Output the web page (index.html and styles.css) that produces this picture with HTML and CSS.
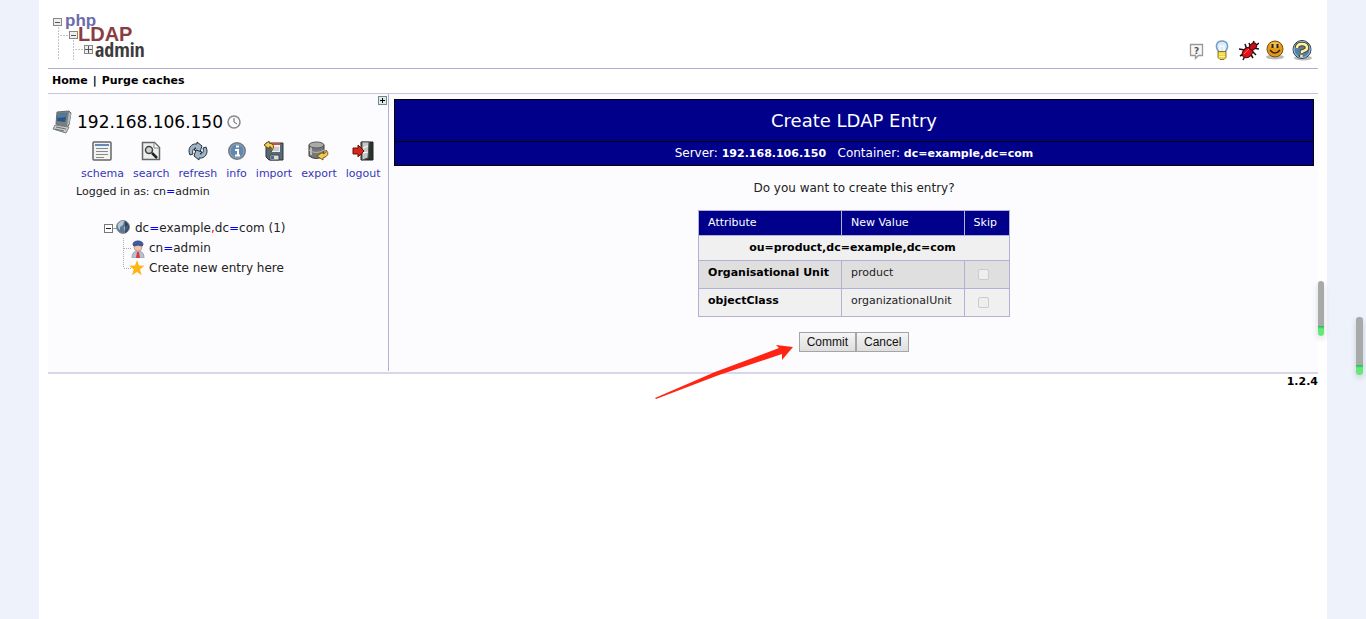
FILE: index.html
```html
<!DOCTYPE html>
<html lang="en">
<head>
    <meta charset="UTF-8">
    <meta name="viewport" content="width=device-width, initial-scale=1.0">
    <title>phpLDAPadmin - Create LDAP Entry</title>
    <link rel="stylesheet" href="styles.css">
</head>
<body>
    <div class="page">
        <header class="header">
            <svg class="logo" width="98" height="50" viewBox="0 0 98 50" role="img" aria-label="phpLDAPadmin">
                <g stroke="#c4c4c4" stroke-dasharray="2 1" fill="none">
                    <path d="M6.500 15v33M21.500 28v20M8 23.500h9M23 37.500h9"/>
                </g>
                <text class="logo-php" x="13" y="14">php</text>
                <text class="logo-ldap" x="26" y="29">LDAP</text>
                <text class="logo-admin" x="43" y="45">admin</text>
                <g fill="#eee" stroke="#888">
                    <rect x="1.500" y="6.500" width="8" height="7"/>
                    <rect x="17.500" y="19.500" width="8" height="7"/>
                    <rect x="32.500" y="33.500" width="8" height="8"/>
                </g>
                <path d="M3 10.500h5M19 23.500h5M33 37.500h7M36.500 34v7" stroke="#555"/>
            </svg>
            <nav class="quick-links">
                <a href="#" aria-label="Request">
                    <svg width="20" height="22" viewBox="0 0 20 22"><path d="M3.500 4.500h12v11h-4l-3 3v-3h-5z" fill="#f8f8f8" stroke="#999" stroke-width="1.300"/><text class="icon-mark" x="7" y="14">?</text></svg>
                </a>
                <a href="#" aria-label="Hints">
                    <svg width="20" height="22" viewBox="0 0 20 22"><path d="M6 12C1 6 4 1 9 1S17 6 12 12z" fill="#dbe9f8" stroke="#6f9dcc" stroke-width="1.500"/><path d="M7 11V5l2 2 2-2v6" fill="none" stroke="#fff"/><path d="M5 11.500h8v6l-2 2H7l-2-2z" fill="#efd045" stroke="#8b751f"/><path d="M6 14h6M6 16.500h6" stroke="#fff39b"/></svg>
                </a>
                <a href="#" aria-label="Bugs">
                    <svg width="20" height="22" viewBox="0 0 20 22"><path d="M0 9l6 1M1 16l5-3M4 20l2-4M6 4l2 6M10 3l2 5M14 18l-3-5M17 15l-4-4M20 9l-6-1M13 6l2-5M16 6l4-3" fill="none" stroke="#181010" stroke-width="1.500"/><ellipse cx="8.500" cy="12.500" rx="6" ry="4.500" transform="rotate(-42 8.500 12.500)" fill="#e31018" stroke="#4c0507"/><ellipse cx="14" cy="6.500" rx="4" ry="3" transform="rotate(-42 14 6.500)" fill="#c20f18" stroke="#4c0507"/><path d="M5 14l5-5" stroke="#ff7070"/></svg>
                </a>
                <a href="#" aria-label="Donate">
                    <svg width="20" height="22" viewBox="0 0 20 22"><ellipse cx="10" cy="17" rx="9" ry="2.500" fill="#bbb"/><circle cx="10" cy="9" r="8" fill="#e39a1a" stroke="#76500e"/><ellipse cx="10" cy="5" rx="5" ry="3" fill="#f4bd4c"/><path d="M7.500 4v4M12.500 4v4" stroke="#222" stroke-width="2"/><path d="M5 10q5 6 10 0" fill="none" stroke="#3c2500" stroke-width="1.500"/></svg>
                </a>
                <a href="#" aria-label="Help">
                    <svg width="22" height="22" viewBox="0 0 22 22"><ellipse cx="12" cy="18" rx="9" ry="2.500" fill="#bbb"/><circle cx="11" cy="9.500" r="9" fill="#5580a8" stroke="#2c4257"/><circle cx="11" cy="9.500" r="8" fill="none" stroke="#a4c3dc"/><path d="M6 8q0-4 5-4t5 4q0 2-5 3.500v1.500M10 15v2" fill="none" stroke="#4f4724" stroke-width="4.500"/><path d="M6 8q0-4 5-4t5 4q0 2-5 3.500v1.500M10.500 15v2" fill="none" stroke="#fff2a5" stroke-width="2.500"/></svg>
                </a>
            </nav>
        </header>

        <nav class="menu"><a href="#">Home</a><span class="divider">|</span><a href="#">Purge caches</a></nav>

        <div class="content">
            <aside class="sidebar">
                <button class="expand" aria-label="Expand tree">
                    <svg width="9" height="9" viewBox="0 0 9 9"><rect x="0.500" y="0.500" width="8" height="8" fill="#dce9e9" stroke="#75898d"/><path d="M2 4.500h5M4.500 2v5" stroke="#000"/></svg>
                </button>
                <div class="server">
                    <svg width="22" height="24" viewBox="0 0 22 24"><path d="M5 2l12-1 2 2-2 12-2 2-11-3z" fill="#788084" stroke="#606a6c"/><path d="M6 4l9-1-2 9-8-1z" fill="#285582"/><path d="M6 4l9-1-1 4-8 1z" fill="#527a9e"/><path d="M17 2l2 2-2 10-2 2z" fill="#b8bdb8"/><path d="M3 15l14 2-3 6-13-4z" fill="#c6cbc7" stroke="#788080"/><path d="M4 17l10 2M3 19l9 2" stroke="#687270"/></svg>
                    <span>192.168.106.150</span>
                    <svg width="16" height="16" viewBox="0 0 16 16"><circle cx="8" cy="8" r="6" fill="#fafafa" stroke="#888" stroke-width="1.500"/><path d="M8 4v4l3 2" fill="none" stroke="#666"/></svg>
                </div>
                <nav class="tools">
                    <a href="#">
                        <svg width="20" height="20" viewBox="0 0 20 20"><rect x="1" y="1" width="18" height="18" rx="1" fill="#f2f2f2" stroke="#666" stroke-width="1.500"/><path d="M3 4h14" stroke="#658ab5" stroke-width="2"/><path d="M4 7.500h12M4 10.500h12M4 13.500h12M4 16.500h8" stroke="#888"/></svg>
                        schema
                    </a>
                    <a href="#">
                        <svg width="20" height="20" viewBox="0 0 20 20"><path d="M1.500 1.500h12l5 5v12h-17z" fill="#eee" stroke="#666" stroke-width="1.500"/><path d="M13 2v5h5" fill="#fff" stroke="#888"/><circle cx="8" cy="9" r="3.500" fill="#c9d4d8" stroke="#444" stroke-width="1.500"/><path d="M11 12l5 5" stroke="#222" stroke-width="2.500"/></svg>
                        search
                    </a>
                    <a href="#">
                        <svg width="20" height="20" viewBox="0 0 20 20"><g fill="#9fb4c8" stroke="#26323e"><path d="M2 14C-1 8 3 2 9 3V1l5 4-2 6-6-2 2-2C5 7 4 10 5 13z"/><path d="M18 6c3 6-1 12-7 11v2l-5-4 2-6 6 2-2 2c3 0 4-3 3-6z"/></g></svg>
                        refresh
                    </a>
                    <a href="#">
                        <svg width="20" height="20" viewBox="0 0 20 20"><circle cx="10" cy="10" r="8" fill="#6488ac" stroke="#727b84" stroke-width="2"/><circle cx="10" cy="10" r="7" fill="none" stroke="#8da9c3"/><path d="M8 9h3v5M8 14.500h5M9 5.500h3" fill="none" stroke="#fff" stroke-width="2"/></svg>
                        info
                    </a>
                    <a href="#">
                        <svg width="20" height="20" viewBox="0 0 20 20"><path d="M2 2h17v17H5l-3-3z" fill="#566a79" stroke="#333"/><path d="M7 2h9v9H7z" fill="#eee"/><path d="M7 2h9v2H7z" fill="#d54e3d"/><path d="M8 7h7M8 9h7" stroke="#aaa"/><path d="M6 14h9v5H6z" fill="#ddd" stroke="#444"/><path d="M7 15h3v3H7z" fill="#456d91"/><path d="M5 0L0 4l5 4V6q4-1 2 5 6-8-2-9z" fill="#f3cd62" stroke="#6b500b"/></svg>
                        import
                    </a>
                    <a href="#">
                        <svg width="22" height="20" viewBox="0 0 22 20"><path d="M1 4v11q7 5 15 0V4z" fill="#777" stroke="#3c3c3c"/><path d="M3 5v9" stroke="#bbb" stroke-width="2"/><path d="M1 9q7 5 15 0" fill="none" stroke="#bbb"/><ellipse cx="8.500" cy="4" rx="7.500" ry="3" fill="#aaa" stroke="#555"/><path d="M18 9q5 5-3 8v2l-6-4 6-4v2q4-1 3-4z" fill="#f0ca54" stroke="#7b5b12"/></svg>
                        export
                    </a>
                    <a href="#">
                        <svg width="22" height="20" viewBox="0 0 22 20"><path d="M9 1h12v18H9z" fill="#26362b" stroke="#222"/><path d="M10 1h7l-1 16-6 2z" fill="#c6c9c6" stroke="#555"/><path d="M11 7l5-2M11 12l5-1" stroke="#fff"/><path d="M1 7h5V4l6 6-6 6v-3H1z" fill="#d7271c" stroke="#691009"/></svg>
                        logout
                    </a>
                </nav>
                <p class="logged-in">Logged in as: cn<span class="eq">=</span>admin</p>
                <ul class="tree">
                    <li>
                        <svg width="28" height="20" viewBox="0 0 28 20"><path d="M9 10.500h4" stroke="#999"/><rect x="0.500" y="6.500" width="8" height="8" fill="#fff" stroke="#777"/><path d="M2 10.500h5" stroke="#222"/><circle cx="19" cy="9" r="6.500" fill="#5c7894" stroke="#8a9299"/><path d="M14 6q3-4 6-3l-1 4-3 2v3q-3-2-2-6zM20 9l4-2v4l-3 3z" fill="#b7c8d5"/><path d="M21 3q4 3 4 6 0 4-4 6z" fill="#172c44" opacity="0.700"/></svg>
                        <span>dc<span class="eq">=</span>example<span class="comma">,</span>dc<span class="eq">=</span>com (1)</span>
                    </li>
                    <li class="child">
                        <svg width="24" height="20" viewBox="0 0 24 20"><path d="M1.500 0v20M2 10.500h7" stroke="#aaa" stroke-dasharray="1 1"/><path d="M10 20q0-7 6-7t6 7z" fill="#b9c2d2" stroke="#99a3b7"/><path d="M15 14h2l1 6h-4z" fill="#d83a3f"/><circle cx="16" cy="9" r="4" fill="#f3c5a5" stroke="#c9a08a"/><path d="M11 7q0-4 5-4t5 4l-1 1q-4-2-8 0z" fill="#4159a0" stroke="#3a4f90"/></svg>
                        <span>cn<span class="eq">=</span>admin</span>
                    </li>
                    <li class="child">
                        <svg width="24" height="20" viewBox="0 0 24 20"><path d="M1.500 0v10M2 10.500h7" stroke="#aaa" stroke-dasharray="1 1"/><path d="M15 2l2 5.500 5.500.2-4.500 3.500 1.700 6L15 14l-5 3.200 1.700-6L7 7.700l6-.2z" fill="#ffb514"/></svg>
                        <a href="#">Create new entry here</a>
                    </li>
                </ul>
            </aside>

            <main class="main">
                <h1 class="title">Create LDAP Entry</h1>
                <h2 class="subtitle">Server: <b>192.168.106.150</b> &nbsp; Container: <b>dc=example,dc=com</b></h2>
                <form class="entry-form">
                    <p>Do you want to create this entry?</p>
                    <table class="entry">
                        <thead>
                            <tr><th>Attribute</th><th>New Value</th><th>Skip</th></tr>
                        </thead>
                        <tbody>
                            <tr class="dn"><td colspan="3">ou=product,dc=example,dc=com</td></tr>
                            <tr class="odd"><td><b>Organisational Unit</b></td><td>product</td><td><input type="checkbox" aria-label="Skip Organisational Unit" disabled></td></tr>
                            <tr><td><b>objectClass</b></td><td>organizationalUnit</td><td><input type="checkbox" aria-label="Skip objectClass" disabled></td></tr>
                        </tbody>
                    </table>
                    <div class="buttons">
                        <button type="submit">Commit</button>
                        <button type="button">Cancel</button>
                        <svg class="arrow" width="140" height="56" viewBox="0 0 140 56"><path d="M0 54L60 28 124 4l-3-3 17 2-11 13v-6L64 31 1 55z" fill="#ff2413"/></svg>
                    </div>
                </form>
            </main>
        </div>
        <footer class="footer">1.2.4</footer>
        <div class="scroll-pill inner"></div>
    </div>
    <div class="scroll-pill outer"></div>
</body>
</html>
```
FILE: styles.css
```css
* {
    box-sizing: border-box;
}

body {
    margin: 0;
    background-color: #edf2fb;
    color: #222;
    font-family: Verdana, "DejaVu Sans", sans-serif;
    font-size: 12px;
    line-height: 16px;
}

a {
    color: inherit;
    text-decoration: none;
}

svg {
    display: block;
    flex-shrink: 0;
}

.page {
    position: relative;
    min-height: 100vh;
    margin: 0 39px;
    padding: 0 9px;
    background-color: #fff;
}

.header {
    display: flex;
    justify-content: space-between;
    align-items: flex-end;
    padding: 12px 5px 6px 4px;
    border-bottom: 1px solid #b3b0d5;
}

.logo {
    overflow: visible;
}

.logo-php,
.logo-ldap {
    font-family: Arial, "Liberation Sans", sans-serif;
    font-weight: bold;
}

.logo-php {
    font-size: 17px;
    fill: #6c6cac;
}

.logo-ldap {
    font-size: 20px;
    fill: #8c3c40;
}

.logo-admin {
    font-family: "Open Sans Condensed", "Liberation Sans Narrow", "Liberation Sans", sans-serif;
    font-size: 20px;
    font-weight: bold;
    fill: #3c3c3c;
}

.quick-links {
    display: flex;
    gap: 6px;
}

.icon-mark {
    font-size: 9px;
    font-weight: bold;
    fill: #555;
}

.menu {
    padding: 4px;
    border-bottom: 1px solid #c8c5e0;
    color: #000;
    font-size: 11px;
    font-weight: bold;
}

.divider {
    margin: 0 5px;
}

.content {
    display: flex;
    border-bottom: 2px solid #d9d6e8;
    background-color: #fcfcfe;
}

.sidebar {
    display: flex;
    flex-direction: column;
    width: 341px;
    margin-bottom: 1px;
    padding: 2px 1px 0 4px;
    border-right: 1px solid #b3b0d5;
}

.expand {
    align-self: flex-end;
    padding: 0;
    border: 0;
    background: none;
}

.server {
    display: flex;
    align-items: center;
    gap: 3px;
    margin-top: 5px;
    color: #000;
    font-size: 17px;
}

.tools {
    display: flex;
    gap: 9px;
    margin: 7px 0 0 29px;
    color: #3737b8;
    font-size: 11px;
}

.tools a {
    display: flex;
    flex-direction: column;
    align-items: center;
    gap: 5px;
}

.logged-in {
    margin: 2px 0 0 24px;
    font-size: 11px;
}

.eq {
    color: #00f;
}

.comma {
    color: #f00;
}

.tree {
    margin: 18px 0 0 52px;
    padding: 0;
    list-style: none;
}

.tree li {
    display: flex;
    align-items: center;
    gap: 3px;
}

.tree .child {
    padding-left: 18px;
}

.main {
    flex: 1;
    padding: 5px 4px 0 5px;
}

.title,
.subtitle {
    margin: 0;
    border: 1px solid #000;
    background-color: #00008b;
    color: #fff;
    font-weight: normal;
    text-align: center;
}

.title {
    padding: 9px 9px 8px;
    font-size: 18px;
    line-height: 24px;
}

.subtitle {
    padding: 3px;
    border-top: 0;
    font-size: 12px;
    line-height: 16px;
}

.subtitle b {
    font-size: 11px;
}

.entry-form {
    display: flex;
    flex-direction: column;
    align-items: center;
    padding: 14px 0 20px;
}

.entry-form p {
    margin: 0 0 14px;
}

.entry {
    border-collapse: collapse;
    background-color: #f0f0f0;
    font-size: 11px;
}

.entry th,
.entry td {
    height: 28px;
    padding: 4px 12px 4px 9px;
    border: 1px solid #b3b0d5;
    text-align: left;
    vertical-align: top;
}

.entry th {
    height: 24px;
    background-color: #00008b;
    color: #fff;
    font-weight: normal;
}

.entry b,
.entry .dn td {
    color: #000;
}

.entry .dn td {
    height: 24px;
    font-weight: bold;
    text-align: center;
}

.entry .odd {
    background-color: #dfdfdf;
}

.entry input {
    appearance: none;
    display: block;
    width: 11px;
    height: 11px;
    margin: 4px 4px 0;
    border: 1px solid #ccc;
    border-radius: 2px;
    background-color: #eee;
}

.buttons {
    position: relative;
    display: flex;
    margin-top: 15px;
}

.buttons button {
    height: 20px;
    padding: 0 7px;
    border: 1px solid #a5a5a5;
    background: linear-gradient(#f5f5f5, #dedede);
    color: #111;
    font-family: Arial, "Liberation Sans", sans-serif;
    font-size: 12px;
}

.arrow {
    position: absolute;
    top: 12px;
    right: 114px;
    pointer-events: none;
}

.footer {
    color: #000;
    font-size: 11px;
    font-weight: bold;
    text-align: right;
}

/* floating scroll indicators */
.scroll-pill {
    position: absolute;
    width: 6px;
    border-radius: 3px;
    background: linear-gradient(to top, #66e879 7px, #1eb860 10px, #a8aaaa 10px);
    box-shadow: 0 3px 6px rgba(0, 0, 0, 0.15);
}

.inner {
    top: 281px;
    right: 3px;
    height: 55px;
}

.outer {
    top: 317px;
    right: 3px;
    width: 7px;
    height: 58px;
}
```
